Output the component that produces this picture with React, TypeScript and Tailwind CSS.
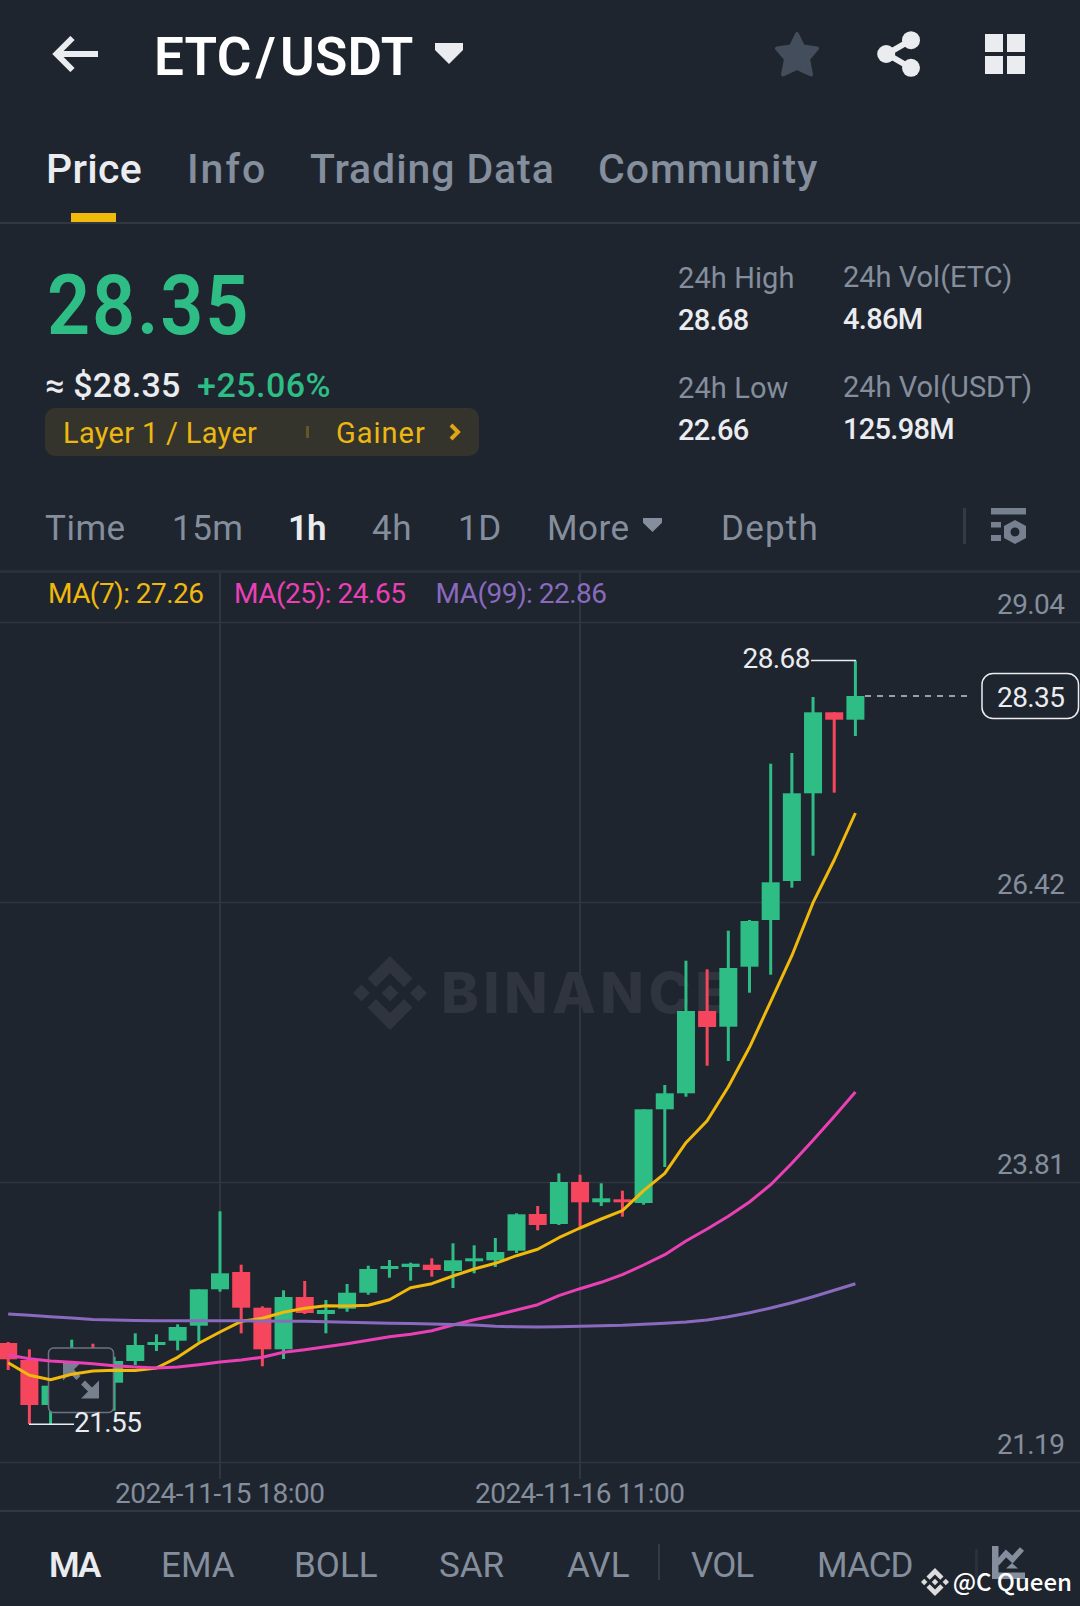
import clsx from "clsx";

type Candle = [high: number, top: number, bottom: number, low: number, down?: 1];

const CANDLES: Candle[] = [
    [1342, 1343, 1359.3, 1370, 1],
    [1349.3, 1360, 1405, 1424, 1],
    [1378, 1385.7, 1405, 1424],
    [1339.7, 1362, 1385, 1392],
    [1343.7, 1362, 1383, 1392, 1],
    [1356.7, 1361, 1382.7, 1410.7],
    [1333.3, 1345, 1361, 1365],
    [1334.3, 1342, 1345, 1351],
    [1324.3, 1327, 1340.7, 1350.3],
    [1289.3, 1289.3, 1325.7, 1341.7],
    [1211.3, 1273.3, 1289.3, 1291.7],
    [1264.7, 1272, 1307.7, 1333.3, 1],
    [1306.3, 1307.7, 1349.3, 1366.3, 1],
    [1290.3, 1297, 1349.3, 1359],
    [1281, 1297, 1313, 1314, 1],
    [1300, 1310, 1314, 1333.3],
    [1284, 1292.7, 1308.7, 1311.7],
    [1265.7, 1269, 1292.7, 1294.7],
    [1260, 1266, 1269, 1277.7],
    [1262.7, 1263.7, 1267, 1280.7],
    [1258.3, 1264.7, 1270, 1276.7, 1],
    [1243.3, 1260.3, 1271, 1288],
    [1245.3, 1258.3, 1261.3, 1273.3],
    [1238, 1252, 1260.3, 1267],
    [1213.3, 1214.3, 1250.7, 1253],
    [1206, 1214, 1225, 1230.3, 1],
    [1173.3, 1182, 1224, 1225],
    [1174.7, 1182, 1202.3, 1228, 1],
    [1183.3, 1198.3, 1202.3, 1206],
    [1190.7, 1199.3, 1202.3, 1216.7, 1],
    [1109.3, 1109.3, 1203, 1204.7],
    [1085, 1093.3, 1109.3, 1167],
    [960.7, 1011, 1093.3, 1096.7],
    [969.3, 1011, 1027, 1065.7, 1],
    [930.7, 968, 1026.7, 1061],
    [920, 921, 966.7, 992.7],
    [763.7, 882.3, 920, 974.7],
    [753, 793.3, 881, 887.7],
    [697, 712.3, 793.3, 855.7],
    [712.3, 712.3, 719.7, 792.7, 1],
    [660.7, 696, 719.7, 736],
];

const MA7 = [
    1362.7, 1375.3, 1379.7, 1374.3, 1371, 1370.3, 1370.5, 1368, 1357.3, 1343.3, 1332, 1321.3, 1318.3, 1312.3,
    1308.3, 1305.7, 1306, 1305.3, 1299.7, 1287.7, 1283.7, 1276, 1269, 1263.3, 1255.7, 1249.3, 1237.7, 1228, 1219,
    1210.7, 1190.7, 1173.3, 1142.7, 1120.7, 1086.7, 1047.3, 1001.7, 955.7, 902.7, 860, 813,
];

const MA25 = [
    1355, 1358.7, 1361, 1362.3, 1363.7, 1365.7, 1367, 1368, 1367, 1364.7, 1362, 1360, 1357.3, 1352.3, 1349.7,
    1346.7, 1343.7, 1340.3, 1336.7, 1334.3, 1330.8, 1325, 1319.7, 1315.3, 1310, 1304.7, 1295.7, 1288.7, 1282.3,
    1274.7, 1265, 1254.7, 1241, 1229, 1216.3, 1202, 1184.7, 1163.3, 1140.3, 1116.5, 1092,
];

const MA99 = [
    1314, 1315.3, 1316.7, 1318.1, 1319.5, 1320, 1320.4, 1320.7, 1320.7, 1320.7, 1320.7, 1320.8, 1321, 1321.2,
    1321.3, 1321.8, 1322.2, 1322.7, 1323.2, 1323.6, 1324, 1324.5, 1325, 1326.3, 1326.8, 1327, 1326.8, 1326.3,
    1325.8, 1325.3, 1324.3, 1323.2, 1322, 1320, 1316.7, 1312.7, 1308, 1302.7, 1296.7, 1290.3, 1283.7,
];

const xAt = (i: number) => 8.2 + i * 21.18;

const toPoints = (values: number[]) => values.map((y, i) => `${xAt(i)},${y}`).join(" ");

const tabs = [
    { label: "Price", box: "w-[141px]", fit: "tracking-[0.3px]", active: true },
    { label: "Info", box: "w-[123px]", fit: "tracking-[2px]" },
    { label: "Trading Data", box: "w-[288px]", fit: "tracking-[0.9px]" },
    { label: "Community", box: "w-[240px]", fit: "tracking-[1px]" },
];

const stats = [
    [
        { label: "24h High", value: "28.68" },
        { label: "24h Low", value: "22.66" },
    ],
    [
        { label: "24h Vol(ETC)", value: "4.86M" },
        { label: "24h Vol(USDT)", value: "125.98M" },
    ],
];

const intervals = [
    { label: "Time", box: "w-[127px]" },
    { label: "15m", box: "w-[116px]" },
    { label: "1h", box: "w-[84px]", active: true },
    { label: "4h", box: "w-[86px]" },
    { label: "1D", box: "w-[89px]" },
    { label: "More", box: "w-[174px]", caret: true },
    { label: "Depth", box: "w-[100px]" },
];

const indicators = [
    { label: "MA", box: "w-[112px]", active: true },
    { label: "EMA", box: "w-[133px]" },
    { label: "BOLL", box: "w-[145px]" },
    { label: "SAR", box: "w-[128px]" },
    { label: "AVL", box: "w-[91px]" },
];

const subIndicators = [
    { label: "VOL", box: "w-[126px]" },
    { label: "MACD", box: "w-[96px]" },
];

const Caret = ({ className }: { className: string }) => (
    <svg viewBox="0 0 28 21" preserveAspectRatio="none" className={className} fill="currentColor">
        <path d="M0 0h28v7L14 21 0 7z" />
    </svg>
);

const BinanceShape = () => (
    <>
        <path d="M37 0 59.500 22.500 51 31 37 17 23 31 14.500 22.500z" />
        <path d="M37 74 59.500 51.500 51 43 37 57 23 43 14.500 51.500z" />
        <path d="M37 28.500 45.500 37 37 45.500 28.500 37z" />
        <path d="M8.500 28.500 17 37 8.500 45.500 0 37z" />
        <path d="M65.500 28.500 74 37 65.500 45.500 57 37z" />
    </>
);

const Header = () => (
    <header className="flex h-[108px] items-center pl-[52px] pr-[55px]">
        <svg viewBox="0 0 46 36" className="h-9 w-[46px] text-[#eaecef]" fill="none" stroke="currentColor" strokeWidth="6">
            <path d="M46 18H6M20.500 2 4.500 18l16 16" />
        </svg>
        <h1 className="ml-14 w-[281px] whitespace-nowrap pt-[6px] text-[53px] font-semibold leading-none tracking-[0.2px] text-white">
            ETC<span className="mx-1">/</span>USDT
        </h1>
        <Caret className="mb-px h-[21px] w-7 text-[#eaecef]" />
        <div className="ml-auto flex items-center">
            <svg viewBox="0 0 46 46" className="size-[46px] text-[#444d5b]" fill="currentColor" stroke="currentColor" strokeWidth="4" strokeLinejoin="round">
                <path d="M23 3l6 12.500 14 2L34 28l3 15.500L23 37 9 43.500 12 28 3 17.500l14-2z" />
            </svg>
            <svg viewBox="0 0 44 46" className="ml-[57px] h-[46px] w-11 text-[#eaecef]" fill="currentColor" stroke="currentColor">
                <path d="M34 9 10 23l24 14" fill="none" strokeWidth="6" />
                <circle cx="34" cy="9.200" r="9" stroke="none" />
                <circle cx="9.200" cy="23" r="9" stroke="none" />
                <circle cx="34" cy="36.800" r="9" stroke="none" />
            </svg>
            <div className="ml-16 grid size-10 grid-cols-2 gap-1">
                {[0, 1, 2, 3].map((n) => (
                    <span key={n} className="bg-[#eaecef]" />
                ))}
            </div>
        </div>
    </header>
);

const Tabs = () => (
    <nav className="flex h-[116px] border-b-2 border-[#323842] pl-[46px]">
        {tabs.map(({ label, box, fit, active }) => (
            <div key={label} className={clsx("relative shrink-0 whitespace-nowrap pt-[37px]", box)}>
                <span
                    className={clsx(
                        "text-[41px] font-medium leading-[48px]",
                        fit,
                        active ? "text-[#eaecef]" : "text-[#848e9c]",
                    )}
                >
                    {label}
                </span>
                {active && <span className="absolute bottom-0 left-[25px] h-[9px] w-[45px] bg-[#f0b90b]" />}
            </div>
        ))}
    </nav>
);

const Summary = () => (
    <section className="flex h-[263px] pl-[45px]">
        <div className="w-[632px]">
            <p className="ml-0.5 mt-10 origin-left scale-x-[.9] text-[84px] font-semibold leading-[84px] tracking-[2px] text-[#2ebd85]">
                28.35
            </p>
            <div className="mt-[14px] flex h-[46px] items-center whitespace-nowrap text-[34px] font-medium leading-none">
                <span className="w-[152px] tracking-[0.2px] text-[#eaecef]">≈ $28.35</span>
                <span className="tracking-[0.5px] text-[#2ebd85]">+25.06%</span>
            </div>
            <div className="flex h-12 w-[434px] items-center whitespace-nowrap rounded-[10px] bg-[#35342c] pl-[18px] text-[29px] leading-none tracking-[0.3px] text-[#edb713]">
                <span className="w-[243px] pt-0.5">Layer 1 / Layer</span>
                <span className="h-3 w-[3px] bg-[#62542b]" />
                <span className="ml-[27px] w-[113px] pt-0.5 tracking-[1px]">Gainer</span>
                <svg viewBox="0 0 12 18" className="h-[18px] w-3" fill="none" stroke="#dfa514" strokeWidth="4">
                    <path d="M2 2l7 7-7 7" />
                </svg>
            </div>
        </div>
        {stats.map((column, c) => (
            <dl key={c} className={clsx("whitespace-nowrap text-[29px] leading-[42px]", c === 0 ? "w-[166px] pl-px pt-[33px]" : "pt-8")}>
                {column.map(({ label, value }) => (
                    <div key={label} className="mb-[26px]">
                        <dt className={clsx("text-[#848e9c]", c === 0 && "tracking-[0.1px]")}>{label}</dt>
                        <dd className="font-medium tracking-[-0.7px] text-[#eaecef]">{value}</dd>
                    </div>
                ))}
            </dl>
        ))}
    </section>
);

const Intervals = () => (
    <nav className="flex h-[86px] items-center border-b-[3px] border-[#2a303b] pl-[45px]">
        {intervals.map(({ label, box, active, caret }) => (
            <div
                key={label}
                className={clsx(
                    "flex shrink-0 items-center whitespace-nowrap text-[35px] leading-none",
                    box,
                    active ? "font-semibold tracking-[-1px] text-[#eaecef]" : "tracking-[0.5px] text-[#848e9c]",
                    label === "Depth" && "tracking-[1.2px]",
                )}
            >
                {label}
                {caret && <Caret className="mb-2 ml-[13px] h-[14px] w-[19px]" />}
            </div>
        ))}
        <span className="mb-1.5 ml-[142px] h-9 w-[3px] bg-[#333945]" />
        <svg viewBox="0 0 35 36" className="mb-1.5 ml-[25px] h-9 w-[35px]" fill="#77808f">
            <path d="M0 0h35v6.500H0zM0 14h10v5.500H0zM0 27h10v6H0z" />
            <path fillRule="evenodd" d="M24 12l11 6v12l-11 6-11-6V18zM24 19.500a4.500 4.500 0 1 0 0 9 4.500 4.500 0 0 0 0-9z" />
        </svg>
    </nav>
);

const Chart = () => (
    <section className="h-[937px]">
        <svg viewBox="0 573 1080 937" className="block h-full w-full font-[Roboto,sans-serif] text-[28px]">
            <g stroke="#303641" strokeWidth="1.500">
                {[622.5, 902.5, 1182.5, 1462.5].map((y) => (
                    <path key={y} d={`M0 ${y}H1080`} />
                ))}
                <path d="M220 573V1479M580 573V1479" strokeWidth="2" />
            </g>

            <g className="text-[#2f343f]" fill="currentColor">
                <g transform="translate(353 956)">
                    <BinanceShape />
                </g>
                <text x="441" y="1013" textLength="289" className="font-[Inter,sans-serif] text-[57px] font-extrabold">
                    BINANCE
                </text>
            </g>

            {CANDLES.map(([high, top, bottom, low, down], i) => (
                <g key={i} fill={down ? "#f6465d" : "#2ebd85"}>
                    <rect x={xAt(i) - 1.5} y={high} width="3" height={low - high} />
                    <rect x={xAt(i) - 9} y={top} width="18" height={bottom - top} />
                </g>
            ))}

            <rect x="48.500" y="1348" width="65" height="64.500" rx="5" fill="#1f252f" stroke="#6b7382" strokeWidth="1.500" />
            <g fill="#77808f" stroke="#77808f">
                <path d="M63 1362.500h18l-18 18z" stroke="none" />
                <path d="M99 1398.500V1380.500l-18 18z" stroke="none" />
                <path d="M69 1368.500l9.500 9.500M83 1382.500l9.500 9.500" strokeWidth="5.500" />
            </g>

            <g fill="none" strokeWidth="3" strokeLinejoin="round">
                <polyline points={toPoints(MA7)} stroke="#f0b90b" />
                <polyline points={toPoints(MA25)} stroke="#eb40b5" />
                <polyline points={toPoints(MA99)} stroke="#8a6abf" />
            </g>

            <text x="48" y="603" textLength="156" fill="#f0b90b">MA(7): 27.26</text>
            <text x="234" y="603" textLength="172" fill="#eb40b5">MA(25): 24.65</text>
            <text x="435.500" y="603" textLength="171.500" fill="#8a6abf">MA(99): 22.86</text>

            <g fill="#848e9c">
                <text x="997" y="614" textLength="68">29.04</text>
                <text x="997" y="894" textLength="68">26.42</text>
                <text x="997" y="1174" textLength="68">23.81</text>
                <text x="997" y="1454" textLength="68">21.19</text>
                <text x="115" y="1503" textLength="210">2024-11-15 18:00</text>
                <text x="475" y="1503" textLength="210">2024-11-16 11:00</text>
            </g>

            <g fill="#eaecef">
                <text x="742.500" y="668" textLength="68">28.68</text>
                <path d="M811 659.800h45v1.500h-45zM29 1423.500h45v1.500H29z" />
                <text x="74" y="1432" textLength="68">21.55</text>
            </g>

            <path d="M865 696H968" stroke="#c3c7cd" strokeWidth="1.500" strokeDasharray="6 6" />
            <rect x="982" y="673.500" width="96.500" height="45" rx="11" fill="#1f252f" stroke="#eaecef" strokeWidth="1.500" />
            <text x="997" y="707" textLength="68" fill="#eaecef">28.35</text>
        </svg>
    </section>
);

const Indicators = () => (
    <footer className="relative flex h-24 items-center border-t-2 border-[#323842] pl-[49px] pt-3">
        {indicators.map(({ label, box, active }) => (
            <span
                key={label}
                className={clsx(
                    "shrink-0 text-[35px] leading-none",
                    box,
                    active ? "font-semibold tracking-[-2px] text-[#eaecef]" : "text-[#848e9c]",
                )}
            >
                {label}
            </span>
        ))}
        <span className="mb-1.5 h-9 w-0.5 shrink-0 bg-[#333945]" />
        <span className="w-[31px] shrink-0" />
        {subIndicators.map(({ label, box }) => (
            <span key={label} className={clsx("shrink-0 text-[35px] leading-none tracking-[-0.9px] text-[#848e9c]", box)}>
                {label}
            </span>
        ))}
        <span className="mb-1 ml-[62px] h-7 w-[3px] shrink-0 bg-[#2a303b]" />
        <svg viewBox="0 0 33 33" className="mb-1.5 ml-[14px] size-[33px] shrink-0 text-[#848e9c]" fill="currentColor">
            <path d="M0 0h6.500v26.500H33V33H0z" />
            <path d="M5 17.500l9-10 6.500 6L30 3" fill="none" stroke="currentColor" strokeWidth="5.500" />
            <path d="M20 17l6 5.500H14z" />
        </svg>

        <div className="absolute bottom-[7px] right-2 flex items-center">
            <svg viewBox="0 0 74 74" className="mt-px size-7 text-[#dcdcdc]" fill="currentColor">
                <BinanceShape />
            </svg>
            <span className="ml-1 font-['Noto_Sans_CJK_SC','Noto_Sans',sans-serif] text-[24px] font-medium leading-9 text-white">
                @C Queen
            </span>
        </div>
    </footer>
);

export default function App() {
    return (
        <main className="min-h-[1606px] w-[1080px] overflow-hidden bg-[#1f252f] font-[Roboto,sans-serif]">
            <Header />
            <Tabs />
            <Summary />
            <Intervals />
            <Chart />
            <Indicators />
        </main>
    );
}
